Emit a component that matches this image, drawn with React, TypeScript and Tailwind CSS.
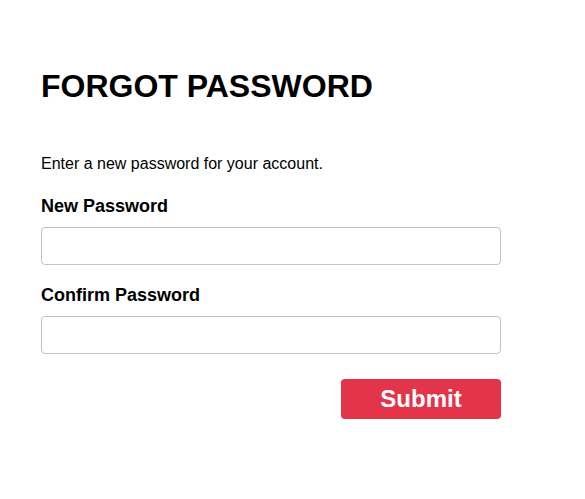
export default function App() {
  return (
    <div className="min-h-screen bg-white font-['Liberation_Sans',Arial,sans-serif] text-black">
      <div className="w-[460px] ml-[41px] pt-[66px]">
        <h1 className="text-[32px] leading-[40px] font-bold">FORGOT PASSWORD</h1>

        <p className="mt-[46px] text-[16px] leading-6">Enter a new password for your account.</p>

        <form className="mt-[18px] flex flex-col" onSubmit={(e) => e.preventDefault()}>
          <label htmlFor="new-password" className="text-[18px] leading-6 font-bold">
            New Password
          </label>
          <input
            id="new-password"
            type="password"
            className="mt-[9px] h-[38px] w-full rounded-[4px] border border-[#c2c2c2] bg-white px-3 text-[16px] outline-none"
          />

          <label htmlFor="confirm-password" className="mt-[18px] text-[18px] leading-6 font-bold">
            Confirm Password
          </label>
          <input
            id="confirm-password"
            type="password"
            className="mt-[9px] h-[38px] w-full rounded-[4px] border border-[#c2c2c2] bg-white px-3 text-[16px] outline-none"
          />

          <div className="mt-[25px] flex justify-end">
            <button
              type="submit"
              className="h-[40px] w-[160px] rounded-[4px] bg-[#e3344a] text-[24px] leading-none font-bold text-white"
            >
              Submit
            </button>
          </div>
        </form>
      </div>
    </div>
  );
}
